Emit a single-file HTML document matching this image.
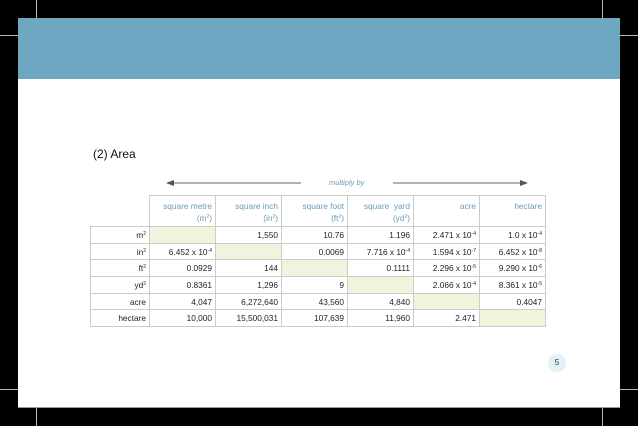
<!DOCTYPE html>
<html><head><style>
body{margin:0;width:638px;height:426px;background:#000;position:relative;overflow:hidden;font-family:"Liberation Sans",Arial,sans-serif}
.page{position:absolute;left:18px;top:18px;width:602px;height:389px;background:#fff}
.band{position:absolute;left:18px;top:18px;width:602px;height:61px;background:#6ea7c2}
.cm{position:absolute;background:#bbb}
h2{position:absolute;left:93px;top:147px;margin:0;font-size:12px;font-weight:normal;color:#111}
table{position:absolute;left:90px;top:195px;border-collapse:collapse;font-size:8.3px;color:#222}
td{border:1px solid #ccc;text-align:right;padding:0 3px;height:16.7px;box-sizing:border-box}
td.l{width:59px}td.c{width:66px}
tr.h td{color:#6a9cb6;height:31px;vertical-align:top;padding-top:5px;line-height:11px}
tr.h td.e{border:none;border-right:1px solid #ccc}
.g{background:#f1f4dc}
sup{font-size:5px;vertical-align:3px}
.num{position:absolute;left:548px;top:354px;width:18px;height:18px;border-radius:50%;background:#e3f1f8;font-size:8px;text-align:center;line-height:18px;color:#333}
</style></head><body>
<div class="page"></div><div class="band"></div>
<div class="cm" style="left:36px;top:0;width:1px;height:18px"></div>
<div class="cm" style="left:602px;top:0;width:1px;height:18px"></div>
<div class="cm" style="left:0;top:35px;width:18px;height:1px"></div>
<div class="cm" style="left:620px;top:35px;width:18px;height:1px"></div>
<div class="cm" style="left:0;top:389px;width:18px;height:1px"></div>
<div class="cm" style="left:620px;top:389px;width:18px;height:1px"></div>
<div class="cm" style="left:36px;top:407px;width:1px;height:19px"></div>
<div class="cm" style="left:602px;top:407px;width:1px;height:19px"></div>
<div class="cm" style="left:18px;top:407px;width:602px;height:1px;background:#999"></div>
<h2>(2) Area</h2>
<svg style="position:absolute;left:0;top:0" width="638" height="426">
<line x1="172" y1="183" x2="301" y2="183" stroke="#666" stroke-width="1"/>
<polygon points="166,183 174,180 174,186" fill="#555"/>
<line x1="393" y1="183" x2="521" y2="183" stroke="#666" stroke-width="1"/>
<polygon points="528,183 520,180 520,186" fill="#555"/>
<text x="329" y="185" font-family="Liberation Sans" font-size="7.5" font-style="italic" fill="#6a9cb6">multiply by</text>
</svg>
<table>
<tr class="h"><td class="l e"></td><td class="c">square metre<br>(m<sup>2</sup>)</td><td class="c">square inch<br>(in<sup>2</sup>)</td><td class="c">square foot<br>(ft<sup>2</sup>)</td><td class="c">square &nbsp;yard<br>(yd<sup>2</sup>)</td><td class="c">acre</td><td class="c">hectare</td></tr>
<tr><td>m<sup>2</sup></td><td class="g"></td><td>1,550</td><td>10.76</td><td>1.196</td><td>2.471 x 10<sup>-4</sup></td><td>1.0 x 10<sup>-4</sup></td></tr>
<tr><td>in<sup>2</sup></td><td>6.452 x 10<sup>-4</sup></td><td class="g"></td><td>0.0069</td><td>7.716 x 10<sup>-4</sup></td><td>1.594 x 10<sup>-7</sup></td><td>6.452 x 10<sup>-8</sup></td></tr>
<tr><td>ft<sup>2</sup></td><td>0.0929</td><td>144</td><td class="g"></td><td>0.1111</td><td>2.296 x 10<sup>-5</sup></td><td>9.290 x 10<sup>-6</sup></td></tr>
<tr><td>yd<sup>2</sup></td><td>0.8361</td><td>1,296</td><td>9</td><td class="g"></td><td>2.066 x 10<sup>-4</sup></td><td>8.361 x 10<sup>-5</sup></td></tr>
<tr><td>acre</td><td>4,047</td><td>6,272,640</td><td>43,560</td><td>4,840</td><td class="g"></td><td>0.4047</td></tr>
<tr><td>hectare</td><td>10,000</td><td>15,500,031</td><td>107,639</td><td>11,960</td><td>2.471</td><td class="g"></td></tr>
</table>
<div class="num">5</div>
</body></html>
